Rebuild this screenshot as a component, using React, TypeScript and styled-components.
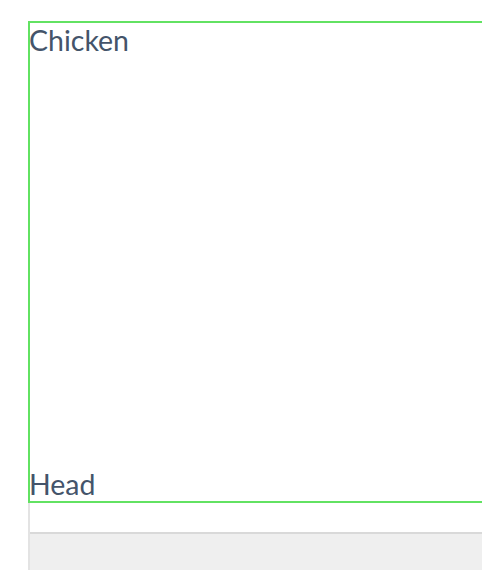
import React from "react";
import styled, { createGlobalStyle } from "styled-components";

const Global = createGlobalStyle`
  html, body { margin: 0; padding: 0; background: #ffffff; overflow: hidden; }
  body { font-family: Lato, "Open Sans", sans-serif; }
`;

const Page = styled.div`
  padding: 21px 0 0 28px;
  width: 482px;
  height: 570px;
  box-sizing: border-box;
  overflow: hidden;
`;

const Column = styled.div`
  width: 520px;
  border-left: 2px solid #e3e3e3;
  display: flex;
  flex-direction: column;
`;

const Frame = styled.div`
  margin-left: -2px;
  height: 482px;
  box-sizing: border-box;
  border: 2px solid #62e262;
  border-right: none;
  display: flex;
  flex-direction: column;
  justify-content: space-between;
`;

const Label = styled.div`
  font-size: 28.5px;
  line-height: 1.2;
  color: #44546a;
  margin-left: -1px;
`;

const Spacer = styled.div`
  height: 29px;
`;

const Tray = styled.div`
  height: 40px;
  background: #efefef;
  border-top: 2px solid #d9d9d9;
`;

export default function App() {
  return (
    <>
      <Global />
      <Page>
        <Column>
          <Frame>
            <Label>Chicken</Label>
            <Label>Head</Label>
          </Frame>
          <Spacer />
          <Tray />
        </Column>
      </Page>
    </>
  );
}
